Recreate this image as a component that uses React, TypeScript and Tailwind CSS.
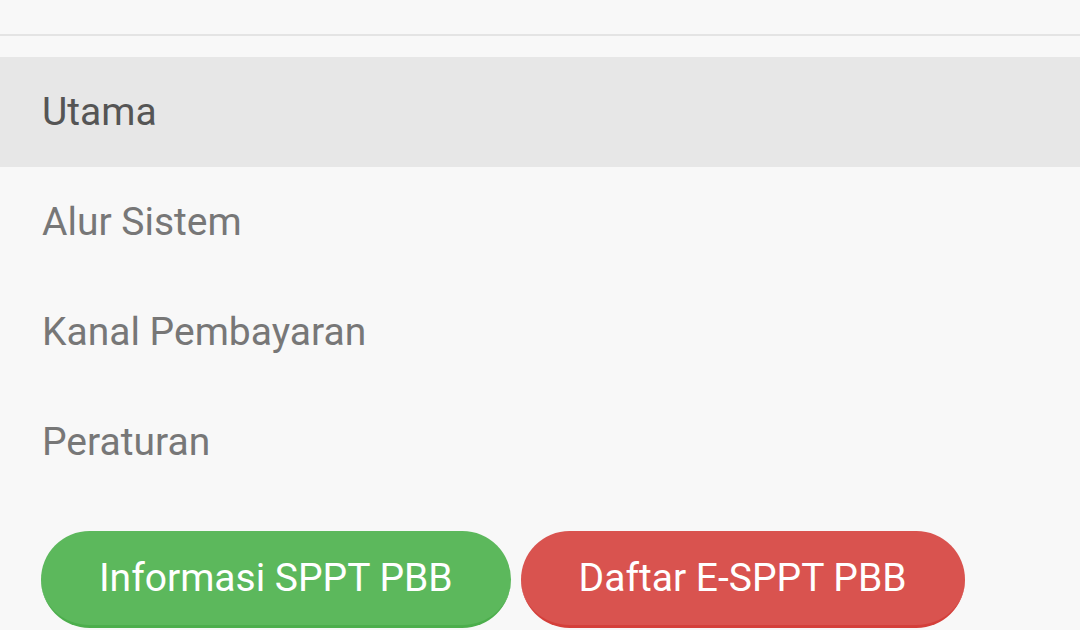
const menuItems = ["Utama", "Alur Sistem", "Kanal Pembayaran", "Peraturan"];

const App = () => {
  const active = "Utama";

  return (
    <div
      className="w-[1080px] h-[630px] overflow-hidden bg-[#f8f8f8]"
      style={{ fontFamily: "Roboto, 'Liberation Sans', sans-serif" }}
    >
      <div className="h-[34px]" />
      <div className="h-[2px] bg-[#e4e4e4]" />
      <nav className="mt-[21px] flex flex-col">
        {menuItems.map((item) => (
          <a
            key={item}
            href="#"
            className={
              item === active
                ? "h-[110px] flex items-center px-[42px] text-[39px] bg-[#e7e7e7] text-[#555555]"
                : "h-[110px] flex items-center px-[42px] text-[39px] text-[#777777]"
            }
          >
            {item}
          </a>
        ))}
      </nav>
      <div className="mt-[34px] flex gap-[10px] px-[41px]">
        <button className="h-[97px] rounded-full px-[58px] text-[39px] text-white bg-[#5cb85c] border-b-[3px] border-[#4cae4c]">
          Informasi SPPT PBB
        </button>
        <button className="h-[97px] rounded-full px-[58px] text-[39px] text-white bg-[#d9534f] border-b-[3px] border-[#d43f3a]">
          Daftar E-SPPT PBB
        </button>
      </div>
    </div>
  );
};

export default App;
